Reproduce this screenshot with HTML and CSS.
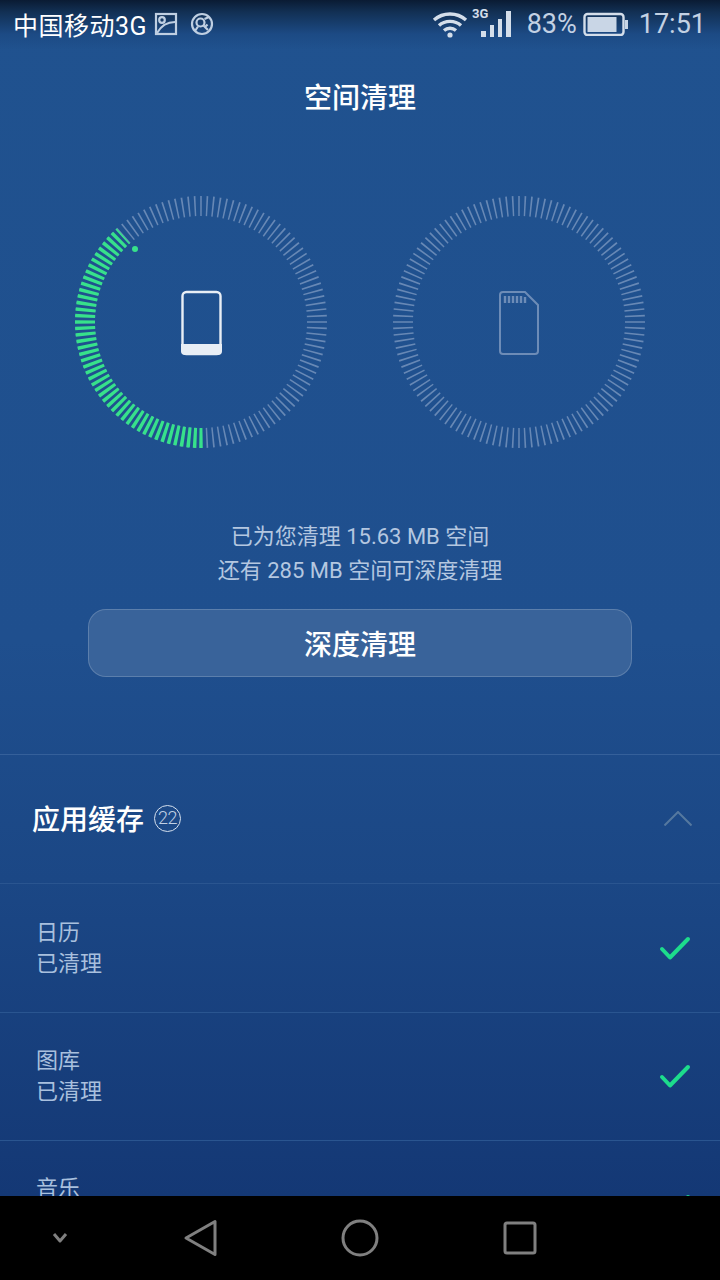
FILE: index.html
```html
<!DOCTYPE html>
<html lang="zh-CN">
<head>
  <meta charset="UTF-8" />
  <title>空间清理</title>
  <link rel="stylesheet" href="styles.css">
</head>
<body>

<div class="screen">
  <div class="statusbar">
    <div class="status-left">
      <span class="carrier">中国移动3G</span>
      <svg class="ic-pic" width="24" height="24" viewBox="0 0 24 24">
        <rect x="2" y="2" width="20" height="20" />
        <circle cx="8" cy="8" r="2.8" />
        <path d="M3 21 C7 14 13 10 21 10" />
      </svg>
      <svg class="ic-key" width="24" height="24" viewBox="0 0 24 24">
        <circle cx="12" cy="12" r="10" />
        <circle cx="10.5" cy="10.5" r="4" />
        <path d="M13.5 13.5 L18 18 M15 15 L17.5 12.5 M5 19 L8 14.5 M14.5 7 L19 5" />
      </svg>
    </div>
    <div class="status-right">
      <svg class="ic-wifi" width="36" height="28" viewBox="0 0 36 28">
        <path d="M2 10 C11 2 25 2 34 10 M7 15.5 C13 10 23 10 29 15.5 M12 20.5 C15.5 17.5 20.5 17.5 24 20.5" />
        <circle cx="18" cy="25" r="2.6" />
      </svg>
      <svg class="ic-signal" width="44" height="32" viewBox="0 0 44 32">
        <text x="0" y="11" class="net">3G</text>
        <rect x="9" y="24" width="5" height="6" />
        <rect x="18" y="18" width="4" height="12" />
        <rect x="26" y="12" width="4" height="18" />
        <rect x="34" y="4" width="5" height="26" />
      </svg>
      <span class="pct">83%</span>
      <svg class="ic-batt" width="46" height="24" viewBox="0 0 46 24">
        <rect x="1.5" y="2" width="39" height="21" rx="3" />
        <rect class="fill" x="4.5" y="5" width="29" height="15" />
        <rect class="fill" x="42" y="8" width="3" height="9" />
      </svg>
      <span class="clock">17:51</span>
    </div>
  </div>

  <main class="content">
    <h1 class="title">空间清理</h1>

    <div class="rings">
      <svg class="ring" width="256" height="256" viewBox="0 0 256 256">
        <mask id="used" maskUnits="userSpaceOnUse" x="0" y="0" width="256" height="256">
          <circle cx="128" cy="128" r="116" fill="none" stroke="#fff" stroke-width="24" pathLength="360" stroke-dasharray="139 221" transform="rotate(89 128 128)" />
        </mask>
        <circle class="ticks" cx="128" cy="128" r="116" pathLength="120" />
        <g mask="url(#used)">
          <circle class="ticks-on" cx="128" cy="128" r="116" pathLength="120" />
        </g>
        <circle class="dot" cx="62" cy="55" r="3" />
        <rect class="phone" x="109.5" y="98" width="38" height="62" rx="4" />
        <path class="phone-base" d="M108 150 H149 V157 Q149 161 145 161 H112 Q108 161 108 157 Z" />
      </svg>
      <svg class="ring" width="256" height="256" viewBox="0 0 256 256">
        <circle class="ticks" cx="128" cy="128" r="116" pathLength="120" />
        <path class="sd" d="M112 98 H134 L147 111 V157 Q147 160 144 160 H112 Q109 160 109 157 V101 Q109 98 112 98 Z" />
        <path class="sd-pins" d="M114 102 V109 M118 102 V109 M122 102 V109 M126 102 V109 M130 102 V109 M134 103 V109" />
      </svg>
    </div>

    <div class="summary">
      <p>已为您清理 15.63 MB 空间</p>
      <p>还有 285 MB 空间可深度清理</p>
    </div>

    <button class="deep-btn">深度清理</button>

    <section class="cache">
      <div class="cache-head">
        <span class="cache-title">应用缓存</span>
        <span class="badge">22</span>
        <svg class="collapse" width="28" height="15" viewBox="0 0 28 15">
          <path d="M0.5 14.5 L14 1 L27.5 14.5" />
        </svg>
      </div>

      <div class="row">
        <div class="row-text">
          <span>日历</span>
          <span>已清理</span>
        </div>
        <svg class="check" width="32" height="26" viewBox="0 0 32 26"><path d="M3 13 L11 21.5 L29 3" /></svg>
      </div>
      <div class="row">
        <div class="row-text">
          <span>图库</span>
          <span>已清理</span>
        </div>
        <svg class="check" width="32" height="26" viewBox="0 0 32 26"><path d="M3 13 L11 21.5 L29 3" /></svg>
      </div>
      <div class="row row-cut">
        <div class="row-text">
          <span>音乐</span>
        </div>
        <svg class="check" width="32" height="26" viewBox="0 0 32 26"><path d="M3 13 L11 21.5 L29 3" /></svg>
      </div>
    </section>
  </main>

  <nav class="navbar">
    <svg class="nav-hide" width="18" height="14" viewBox="0 0 18 14"><path d="M3 3 L9 10 L15 3" /></svg>
    <svg class="nav-back" width="36" height="40" viewBox="0 0 36 40"><path d="M3 20 L32 3.5 V36.5 Z" /></svg>
    <svg class="nav-home" width="40" height="40" viewBox="0 0 40 40"><circle cx="20" cy="20" r="17" /></svg>
    <svg class="nav-recent" width="36" height="36" viewBox="0 0 36 36"><rect x="3" y="3" width="30" height="30" rx="2" /></svg>
  </nav>
</div>

</body>
</html>
```

FILE: styles.css
```css
* {
  box-sizing: border-box;
}
html, body {
  margin: 0;
  height: 100%;
}
body {
  font-family: Roboto, "Noto Sans CJK SC", sans-serif;
  background: #000;
}
svg {
  display: block;
  fill: none;
}
.screen {
  width: 720px;
  height: 1280px;
  display: flex;
  flex-direction: column;
  overflow: hidden;
  background: linear-gradient(180deg, #20528f 0, #1f4f8e 640px, #1b4785 880px, #143875 1196px);
}

/* status bar */
.statusbar {
  height: 50px;
  flex: none;
  display: flex;
  justify-content: space-between;
  align-items: center;
  padding: 0 14px 2px 13px;
  background: linear-gradient(180deg, #0a1b33 0, #123054 12px, #1c4a84 34px, rgba(32, 82, 143, 0) 50px);
}
.status-left, .status-right {
  display: flex;
  align-items: center;
}
.carrier {
  font-size: 25px;
  letter-spacing: 0.5px;
  color: #fff;
  margin-right: 7px;
}
.ic-pic rect, .ic-pic circle, .ic-pic path,
.ic-key circle, .ic-key path {
  stroke: #bfcfe2;
  stroke-width: 2.2;
}
.ic-key {
  margin-left: 12px;
}
.ic-wifi path {
  stroke: #d4deea;
  stroke-width: 3.4;
}
.ic-wifi circle, .ic-signal rect {
  fill: #d4deea;
}
.ic-signal {
  margin: -2px 0 0 4px;
}
.net {
  font-size: 13px;
  font-weight: 700;
  fill: #d4deea;
}
.pct, .clock {
  font-size: 27px;
  color: #c3d1e3;
}
.pct {
  margin-left: 11px;
}
.ic-batt {
  margin-left: 6px;
}
.ic-batt rect {
  stroke: #d4deea;
  stroke-width: 2.4;
}
.ic-batt .fill {
  fill: #c9d6e6;
  stroke: none;
}
.clock {
  margin-left: 10px;
}

.content {
  flex: 1;
  min-height: 0;
  overflow: hidden;
}
.title {
  margin: 0;
  height: 94px;
  padding-top: 29px;
  line-height: 40px;
  text-align: center;
  font-size: 28px;
  font-weight: 500;
  color: #fff;
}

/* rings */
.rings {
  display: flex;
  justify-content: center;
  gap: 62px;
  margin-top: 50px;
}
.ticks, .ticks-on {
  fill: none;
  stroke-width: 20;
}
.ticks {
  stroke: #6788b5;
  stroke-dasharray: 0.26 0.74;
  stroke-dashoffset: 0.13;
}
.ticks-on {
  stroke: #37e18b;
  stroke-dasharray: 0.55 0.45;
  stroke-dashoffset: 0.275;
}
.dot {
  fill: #37e18b;
}
.phone {
  stroke: #e8eef5;
  stroke-width: 2.4;
}
.phone-base {
  fill: #e8eef5;
}
.sd {
  stroke: #6d8cb7;
  stroke-width: 2;
}
.sd-pins {
  stroke: #6d8cb7;
  stroke-width: 2.4;
}

.summary {
  margin-top: 70px;
  text-align: center;
  font-size: 22px;
  line-height: 34px;
  color: #b4c7e0;
}
.summary p {
  margin: 0;
}
.deep-btn {
  display: block;
  width: 544px;
  height: 68px;
  margin: 21px 0 0 88px;
  border: 1px solid rgba(255, 255, 255, 0.18);
  border-radius: 18px;
  background: #39639a;
  font-family: inherit;
  font-size: 28px;
  font-weight: 500;
  color: #fff;
}

/* cache list */
.cache {
  margin-top: 77px;
  border-top: 1px solid #35609a;
}
.cache-head {
  height: 128px;
  display: flex;
  align-items: center;
  padding: 0 28px 2px 32px;
}
.cache-title {
  font-size: 28px;
  font-weight: 500;
  color: #fff;
}
.badge {
  width: 27px;
  height: 27px;
  margin-left: 10px;
  border: 1.5px solid #d5e0ee;
  border-radius: 50%;
  font-size: 18px;
  font-weight: 300;
  line-height: 24px;
  letter-spacing: -0.5px;
  text-align: center;
  color: #c0d0e4;
}
.collapse {
  margin-left: auto;
}
.collapse path {
  stroke: #55789f;
  stroke-width: 2;
}
.row {
  height: 128.5px;
  display: flex;
  align-items: center;
  justify-content: space-between;
  padding: 0 29px 0 36px;
  border-top: 1px solid #2a5590;
}
.row-cut {
  align-items: flex-start;
  padding-top: 32px;
}
.row-text {
  display: flex;
  flex-direction: column;
  font-size: 22px;
  line-height: 31px;
  color: #a9c0de;
}
.check {
  margin-top: 2px;
}
.row-cut .check {
  margin-top: 21px;
}
.check path {
  stroke: #1ddc8c;
  stroke-width: 4;
  stroke-linecap: round;
  stroke-linejoin: round;
}

/* nav bar */
.navbar {
  height: 84px;
  flex: none;
  display: flex;
  align-items: center;
  background: #000;
  padding: 0 0 0 51px;
}
.navbar path, .navbar circle, .navbar rect {
  stroke: #808080;
  stroke-width: 3;
  stroke-linejoin: round;
}
.nav-hide {
  margin-right: 114px;
}
.nav-back {
  margin-right: 121px;
}
.nav-home {
  margin-right: 122px;
}
```
